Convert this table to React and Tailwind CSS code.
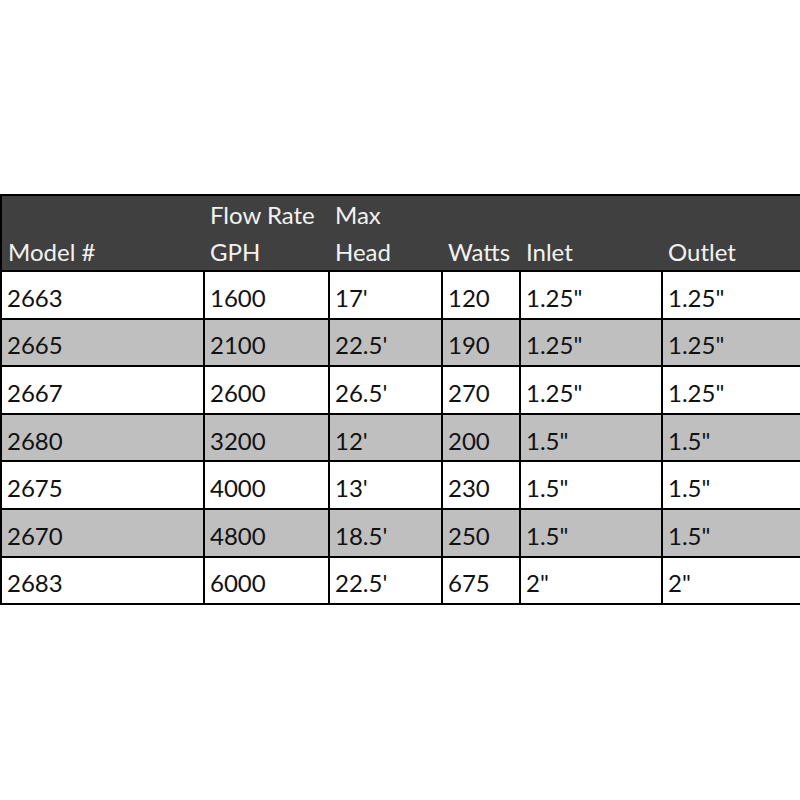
// Pump spec table: model, flow rate, head, watts, inlet/outlet sizes.
const rows = [
  ['2663', '1600', "17'", '120', '1.25"', '1.25"'],
  ['2665', '2100', "22.5'", '190', '1.25"', '1.25"'],
  ['2667', '2600', "26.5'", '270', '1.25"', '1.25"'],
  ['2680', '3200', "12'", '200', '1.5"', '1.5"'],
  ['2675', '4000', "13'", '230', '1.5"', '1.5"'],
  ['2670', '4800', "18.5'", '250', '1.5"', '1.5"'],
  ['2683', '6000', "22.5'", '675', '2"', '2"'],
]

const widths = ['w-[203px]', 'w-[125px]', 'w-[113px]', 'w-[78px]', 'w-[142px]', 'w-[139px]']

export default function App() {
  return (
    <div className="w-[800px] h-[800px] bg-white pt-[194px] font-['Lato','Open_Sans',sans-serif] text-[24px] overflow-hidden">
      <table className="w-[802px] border-collapse table-fixed">
        <thead>
          <tr className="bg-[#404041] text-[#f2f2f2] border-t-2 border-l-2 border-black h-[73px] leading-[37px]">
            <th className={`${widths[0]} text-left font-normal align-bottom pl-[6px]`}>Model #</th>
            <th className={`${widths[1]} text-left font-normal align-bottom pl-[6px]`}>
              Flow Rate<br />GPH
            </th>
            <th className={`${widths[2]} text-left font-normal align-bottom pl-[6px]`}>
              Max<br />Head
            </th>
            <th className={`${widths[3]} text-left font-normal align-bottom pl-[6px]`}>Watts</th>
            <th className={`${widths[4]} text-left font-normal align-bottom pl-[6px]`}>Inlet</th>
            <th className={`${widths[5]} text-left font-normal align-bottom pl-[6px]`}>Outlet</th>
          </tr>
        </thead>
        <tbody>
          {rows.map((r, i) => (
            <tr key={r[0]} className={`h-[47.6px] ${i % 2 ? 'bg-[#bfbfbf]' : 'bg-white'} text-[#111]`}>
              {r.map((c, j) => (
                <td key={j} className="border-2 border-black pl-[5px] pt-[6px] leading-none">
                  {c}
                </td>
              ))}
            </tr>
          ))}
        </tbody>
      </table>
    </div>
  )
}
